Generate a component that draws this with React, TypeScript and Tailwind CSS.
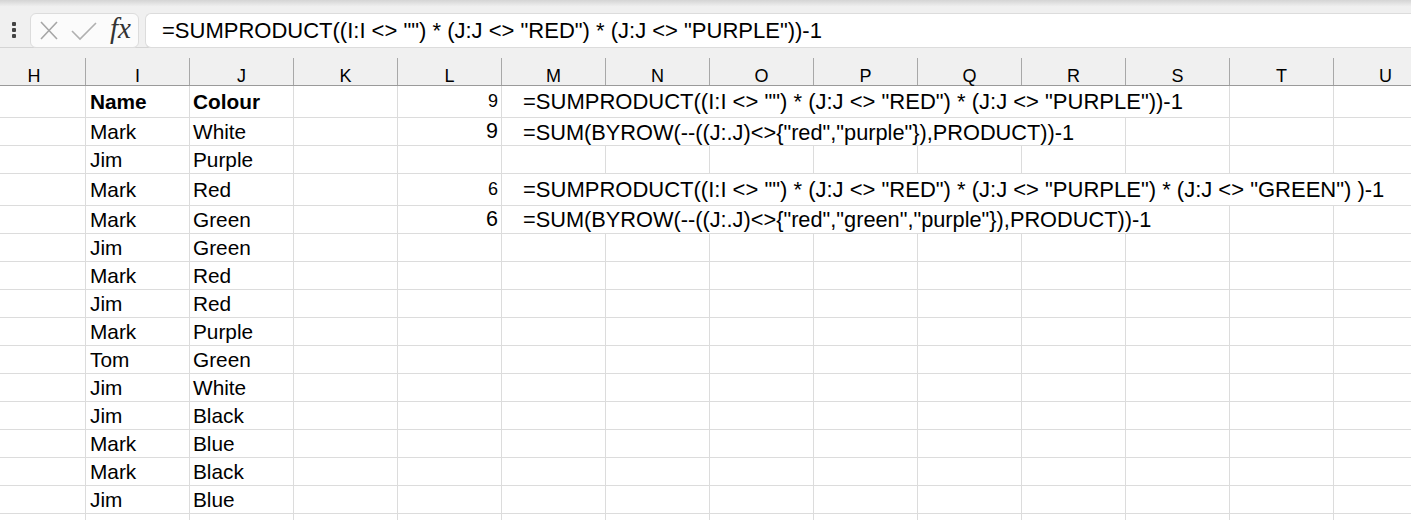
const letters = ["H", "I", "J", "K", "L", "M", "N", "O", "P", "Q", "R", "S", "T", "U"];

type Row = {
  name?: string;
  colour?: string;
  bold?: boolean;
  value?: string;
  small?: boolean;
  formula?: string;
  size?: string;
  span?: string;
  spanned?: number;
  tall?: boolean;
};

const sumFormula = '=SUMPRODUCT((I:I <> "") * (J:J <> "RED") * (J:J <> "PURPLE"))-1';

const rows: Row[] = [
  { name: "Name", colour: "Colour", bold: true, value: "9", small: true, formula: sumFormula, size: "text-[22px]", span: "col-span-7", spanned: 7, tall: true },
  { name: "Mark", colour: "White", value: "9", formula: '=SUM(BYROW(--((J:.J)<>{"red","purple"}),PRODUCT))-1', size: "text-[21.75px] pt-[3px]", span: "col-span-6", spanned: 6 },
  { name: "Jim", colour: "Purple" },
  { name: "Mark", colour: "Red", value: "6", small: true, formula: '=SUMPRODUCT((I:I <> "") * (J:J <> "RED") * (J:J <> "PURPLE") * (J:J <> "GREEN") )-1', size: "text-[22px]", span: "col-span-9", spanned: 9, tall: true },
  { name: "Mark", colour: "Green", value: "6", formula: '=SUM(BYROW(--((J:.J)<>{"red","green","purple"}),PRODUCT))-1', size: "text-[21.75px] pt-[2px]", span: "col-span-7", spanned: 7 },
  { name: "Jim", colour: "Green" },
  { name: "Mark", colour: "Red" },
  { name: "Jim", colour: "Red" },
  { name: "Mark", colour: "Purple" },
  { name: "Tom", colour: "Green" },
  { name: "Jim", colour: "White" },
  { name: "Jim", colour: "Black" },
  { name: "Mark", colour: "Blue" },
  { name: "Mark", colour: "Black" },
  { name: "Jim", colour: "Blue" },
  {},
];

const cell = "border-r border-b border-[#dcdcdc] flex items-center overflow-hidden whitespace-nowrap";

function SheetRow({ row }: { row: Row }) {
  const blanks = 9 - (row.spanned ?? 0);
  return (
    <div className={`grid grid-cols-[86px_repeat(13,104px)] ${row.tall ? "h-[32px]" : "h-[28px]"}`}>
      <div className={cell} />
      <div className={`${cell} pl-[4px] ${row.bold ? "font-bold" : ""}`}>{row.name}</div>
      <div className={`${cell} pl-[3px] ${row.bold ? "font-bold" : ""}`}>{row.colour}</div>
      <div className={cell} />
      <div className={`${cell} justify-end pr-[3px] ${row.small ? "text-[18px]" : "text-[21.5px]"}`}>{row.value}</div>
      {row.formula && <div className={`${cell} ${row.span} ${row.size} pl-[21px]`}>{row.formula}</div>}
      {Array.from({ length: blanks }).map((_, i) => (
        <div key={i} className={cell} />
      ))}
    </div>
  );
}

export default function App() {
  return (
    <div className="h-[520px] w-[1411px] overflow-hidden bg-white font-['Liberation_Sans',Arial,sans-serif] text-[20.8px] text-black">
      <div className="h-[48px] bg-gradient-to-b from-[#d4d4d4] via-[#f0f0f0] via-[14%] to-[#f0f0f0] flex items-start border-b border-[#d4d4d4]">
        <div className="w-[28px] h-full flex flex-col items-center justify-start gap-[2px] pt-[22px]">
          <span className="w-[4px] h-[4px] rounded-[1px] bg-[#444]" />
          <span className="w-[4px] h-[4px] rounded-[1px] bg-[#444]" />
          <span className="w-[4px] h-[4px] rounded-[1px] bg-[#444]" />
        </div>
        <div className="ml-[2px] mt-[13px] h-[35px] w-[109px] rounded-[6px] border border-[#dcdcdc] bg-[#fbfbfb] flex items-center">
          <svg width="22" height="22" viewBox="0 0 22 22" className="ml-[7px]" fill="none" stroke="#a6a6a6" strokeWidth="1.6">
            <path d="M3 2l16 17M19 2L3 19" />
          </svg>
          <svg width="28" height="22" viewBox="0 0 28 22" className="ml-[11px]" fill="none" stroke="#b0b0b0" strokeWidth="1.6">
            <path d="M1 11l8 8L25 3" />
          </svg>
          <span className="ml-[11px] font-['Liberation_Serif',serif] italic text-[29px] leading-none text-[#333] pb-[4px]">fx</span>
        </div>
        <div className="ml-[6px] mt-[13px] h-[35px] flex-1 rounded-tl-[6px] rounded-bl-[6px] border border-r-0 border-[#dcdcdc] bg-white flex items-center pl-[16px] whitespace-nowrap text-[22px]">
          {sumFormula}
        </div>
      </div>
      <div className="grid grid-cols-[86px_repeat(13,104px)] h-[38px] bg-[#f0f0f0] border-b border-[#9a9a9a]">
        {letters.map((l) => (
          <div key={l} className={`relative flex items-end justify-center text-[18px] leading-[18px] text-black ${l === "H" ? "pr-[18px]" : "pr-[1px]"}`}>
            {l}
            <span className="absolute right-0 bottom-0 top-[10px] w-px bg-[#a8a8a8]" />
          </div>
        ))}
      </div>
      {rows.map((row, i) => (
        <SheetRow key={i} row={row} />
      ))}
    </div>
  );
}
